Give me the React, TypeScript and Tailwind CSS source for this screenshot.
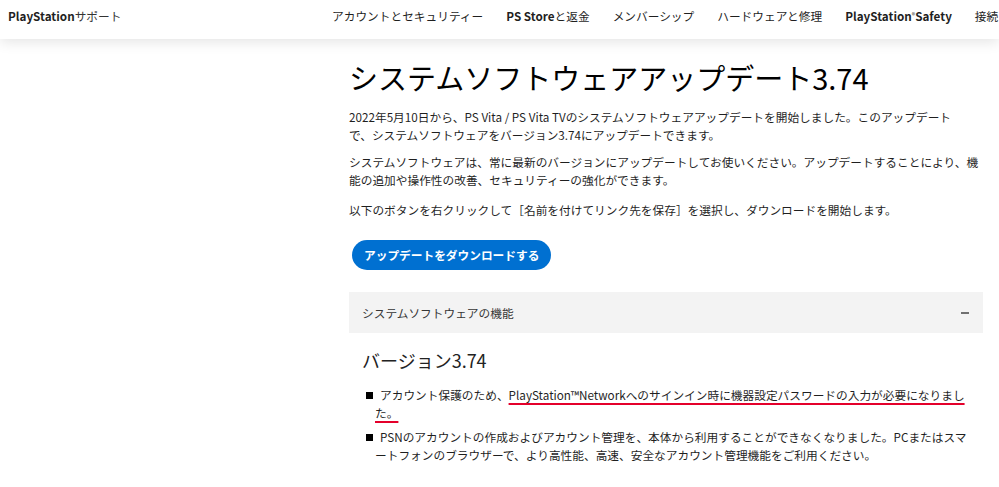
const font = { fontFamily: '"Noto Sans CJK JP", "Noto Sans", sans-serif' };

function Header() {
  return (
    <header className="relative z-10 flex h-[39px] items-start overflow-hidden whitespace-nowrap bg-white pl-[8px] pt-[8px] text-[11.7px] leading-[15px] text-[#1f1f1f] shadow-[0_3px_14px_rgba(0,0,0,0.11)]">
      <div className="w-[324px] shrink-0">
        <span className="font-semibold">PlayStation</span>
        <span className="text-[#333]">サポート</span>
      </div>
      <nav className="flex shrink-0 gap-[23px]">
        <span>アカウントとセキュリティー</span>
        <span>
          <span className="font-bold">PS Store</span>と返金
        </span>
        <span>メンバーシップ</span>
        <span>ハードウェアと修理</span>
        <span className="font-bold">
          PlayStation<sup className="text-[7px] font-normal">®</sup>Safety
        </span>
        <span>接続</span>
      </nav>
    </header>
  );
}

export default function App() {
  return (
    <div className="min-h-screen bg-white" style={font}>
      <Header />
      <main className="ml-[349px] w-[634px] pt-[21px] text-[11.7px] leading-[18px] text-[#1f1f1f]">
        <h1 className="text-[29px] font-normal leading-[34px] text-black">
          システムソフトウェアアップデート3.74
        </h1>
        <p className="mt-[14px]">
          2022年5月10日から、PS Vita / PS Vita TVのシステムソフトウェアアップデートを開始しました。このアップデート
          <br />
          で、システムソフトウェアをバージョン3.74にアップデートできます。
        </p>
        <p className="mt-[9px]">
          システムソフトウェアは、常に最新のバージョンにアップデートしてお使いください。アップデートすることにより、機能の追加や操作性の改善、セキュリティーの強化ができます。
        </p>
        <p className="mt-[12px]">
          以下のボタンを右クリックして［名前を付けてリンク先を保存］を選択し、ダウンロードを開始します。
        </p>
        <button className="ml-[3px] mt-[21px] inline-flex h-[30px] items-center rounded-full bg-[#0070d1] px-[12px] text-[11.7px] font-bold text-white">
          アップデートをダウンロードする
        </button>
        <div className="mt-[22px] flex h-[41px] items-center justify-between bg-[#f3f3f3] pl-[13px] pr-[14px] text-[#363636]">
          <span>システムソフトウェアの機能</span>
          <span className="h-[2px] w-[8px] bg-[#707070]" />
        </div>
        <div className="px-[13px]">
          <h2 className="mt-[15px] text-[18px] font-normal leading-[24px] text-[#222]">
            バージョン3.74
          </h2>
          <ul className="mt-[14px] space-y-[6px]">
            <li className="pl-[13px] -indent-[10px]">
              <span className="mr-[7px] ml-[1px] inline-block h-[7px] w-[7px] bg-black align-[1px]" />
              アカウント保護のため、
              <span className="underline decoration-[#e4002b] decoration-2 underline-offset-[3px]">
                PlayStation™Networkへのサインイン時に機器設定パスワードの入力が必要になりました。
              </span>
            </li>
            <li className="pl-[13px] -indent-[10px]">
              <span className="mr-[7px] ml-[1px] inline-block h-[7px] w-[7px] bg-black align-[1px]" />
              PSNのアカウントの作成およびアカウント管理を、本体から利用することができなくなりました。PCまたはスマートフォンのブラウザーで、より高性能、高速、安全なアカウント管理機能をご利用ください。
            </li>
          </ul>
        </div>
      </main>
    </div>
  );
}
